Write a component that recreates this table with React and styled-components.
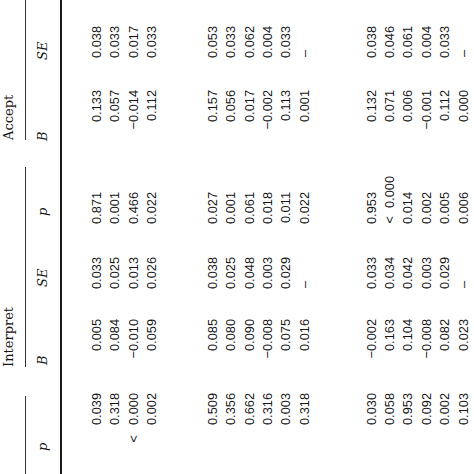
import styled, { createGlobalStyle } from "styled-components";

const GlobalStyle = createGlobalStyle`
body {
  margin: 0;
  background: #fff;
}
`

const columns = "81px 74px 62px 65px 102px 64px 1fr";

const headers = [
    { label: "p", pad: 23 },
    { label: "B", pad: 28 },
    { label: "SE", pad: 32 },
    { label: "p", pad: 41 },
    { label: "B", pad: 51 },
    { label: "SE", pad: 30 },
];

const blocks = [
    {
        gap: 25.8,
        rows: [
            ["0.039", "0.005", "0.033", "0.871", "0.133", "0.038"],
            ["0.318", "0.084", "0.025", "0.001", "0.057", "0.033"],
            ["<0.000", "−0.010", "0.013", "0.466", "−0.014", "0.017"],
            ["0.002", "0.059", "0.026", "0.022", "0.112", "0.033"],
        ],
    },
    {
        gap: 42.4,
        rows: [
            ["0.509", "0.085", "0.038", "0.027", "0.157", "0.053"],
            ["0.356", "0.080", "0.025", "0.001", "0.056", "0.033"],
            ["0.662", "0.090", "0.048", "0.061", "0.017", "0.062"],
            ["0.316", "−0.008", "0.003", "0.018", "−0.002", "0.004"],
            ["0.003", "0.075", "0.029", "0.011", "0.113", "0.033"],
            ["0.318", "0.016", "–", "0.022", "0.001", "–"],
        ],
    },
    {
        gap: 48.6,
        rows: [
            ["0.030", "−0.002", "0.033", "0.953", "0.132", "0.038"],
            ["0.058", "0.163", "0.034", "<0.000", "0.071", "0.046"],
            ["0.953", "0.104", "0.042", "0.014", "0.006", "0.061"],
            ["0.092", "−0.008", "0.003", "0.002", "−0.001", "0.004"],
            ["0.002", "0.082", "0.029", "0.005", "0.112", "0.033"],
            ["0.103", "0.023", "–", "0.006", "0.000", "–"],
        ],
    },
];

function Value({ text, col }) {
    if (text === "–") return <Dash>–</Dash>;
    if (text === "<0.000") {
        if (col === 0) return <><Lt $space={10}>&lt;</Lt>0.000</>;
        return <Pushed $by={16}><Lt $space={8}>&lt;</Lt>0.000</Pushed>;
    }
    return text;
}

function App() {
    return (
        <Frame>
            <GlobalStyle />
            <Sheet>
                <GroupRow>
                    <Group $w={78} $gap={0} />
                    <Group $w={200} $gap={29}>Interpret</Group>
                    <Group $w={160} $gap={27}>Accept</Group>
                </GroupRow>
                <HeadRow>
                    {headers.map((h, i) => (
                        <Head key={i} $pad={h.pad}>{h.label}</Head>
                    ))}
                    <Head $pad={0} />
                </HeadRow>
                {blocks.map((block, b) => (
                    <Block key={b} $gap={block.gap}>
                        {block.rows.map((row, r) => (
                            <Row key={r}>
                                {row.map((v, c) => (
                                    <Cell key={c}><Value text={v} col={c} /></Cell>
                                ))}
                                <Cell />
                            </Row>
                        ))}
                    </Block>
                ))}
            </Sheet>
        </Frame>
    )
}

const Frame = styled.div`
width: 474px;
height: 474px;
overflow: hidden;
background: #fff;
`

const Sheet = styled.div`
width: 474px;
height: 474px;
transform: rotate(-90deg);
display: flex;
flex-direction: column;
color: #141414;
font-family: "Liberation Sans", Arial, "DejaVu Sans", sans-serif;
`

const GroupRow = styled.div`
display: flex;
height: 26px;
flex: none;
`

const Group = styled.div`
width: ${props => props.$w}px;
margin-left: ${props => props.$gap}px;
height: 25px;
flex: none;
border-bottom: 1px solid #333;
font-family: "DejaVu Serif", "Liberation Serif", serif;
font-size: 13px;
line-height: 17px;
`

const HeadRow = styled.div`
display: grid;
grid-template-columns: ${columns};
height: 34px;
flex: none;
border-bottom: 2px solid #1a1a1a;
font-family: "DejaVu Serif", "Liberation Serif", serif;
font-style: italic;
font-size: 13px;
line-height: 34px;
`

const Head = styled.div`
padding-left: ${props => props.$pad}px;
white-space: nowrap;
`

const Block = styled.div`
margin-top: ${props => props.$gap}px;
flex: none;
`

const Row = styled.div`
display: grid;
grid-template-columns: ${columns};
height: 18.4px;
font-family: "Liberation Sans", Arial, sans-serif;
font-size: 12.8px;
line-height: 18.4px;
`

const Cell = styled.div`
text-align: right;
white-space: nowrap;
`

const Lt = styled.span`
margin-right: ${props => props.$space}px;
`

const Pushed = styled.span`
display: inline-block;
margin-right: -${props => props.$by}px;
`

const Dash = styled.span`
display: inline-block;
width: 31px;
text-align: left;
`

export default App;
